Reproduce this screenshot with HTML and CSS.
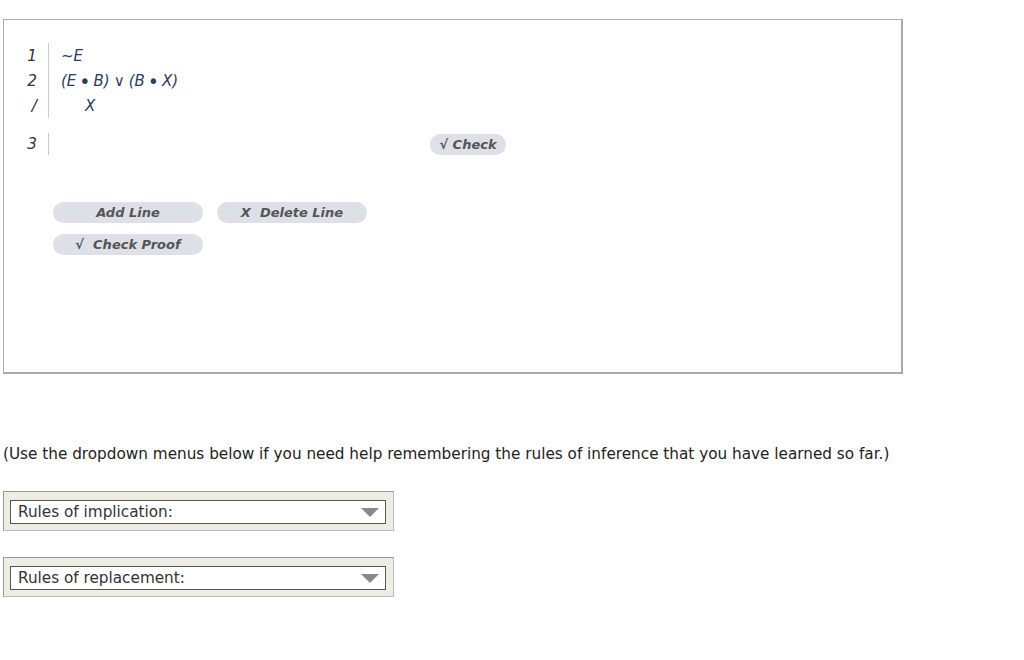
FILE: index.html
```html
<!DOCTYPE html>
<html lang="en">
<head>
  <meta charset="UTF-8" />
  <title>Proof</title>
  <link rel="stylesheet" href="styles.css">
</head>
<body>
  <div class="page">
    <div class="proof-box">
      <div class="premises">
        <div class="row">
          <div class="num">1</div>
          <div class="formula">~E</div>
        </div>
        <div class="row">
          <div class="num">2</div>
          <div class="formula">(E<span class="op dot">&bull;</span>B)<span class="op">&or;</span>(B<span class="op dot">&bull;</span>X)</div>
        </div>
        <div class="row">
          <div class="num">/</div>
          <div class="formula concl">X</div>
        </div>
      </div>
      <div class="row step">
        <div class="num">3</div>
        <div class="formula"></div>
        <button class="pill check">&radic; Check</button>
      </div>
      <div class="actions">
        <button class="pill">Add Line</button>
        <button class="pill">X&nbsp; Delete Line</button>
        <button class="pill">&radic;&nbsp; Check Proof</button>
      </div>
    </div>

    <p class="hint">(Use the dropdown menus below if you need help remembering the rules of inference that you have learned so far.)</p>

    <div class="dropdown">
      <div class="select">
        <span>Rules of implication:</span>
        <span class="arrow"></span>
      </div>
    </div>
    <div class="dropdown">
      <div class="select">
        <span>Rules of replacement:</span>
        <span class="arrow"></span>
      </div>
    </div>
  </div>
</body>
</html>
```

FILE: styles.css
```css
body {
  margin: 0;
  padding: 0;
  font-family: Verdana, "DejaVu Sans", sans-serif;
  font-size: 15.25px;
  color: #222;
  background: #fff;
}
.page {
  padding: 19px 0 0 3px;
}
.proof-box {
  width: 900px;
  height: 355px;
  border: 2px solid #aaa;
  border-top-width: 1px;
  border-left-width: 1px;
  box-sizing: border-box;
  padding-top: 23px;
}
.row {
  display: flex;
  align-items: center;
  height: 25px;
}
.num {
  width: 33px;
  text-align: right;
  font-style: italic;
  color: #333;
}
.formula {
  height: 100%;
  margin-left: 11px;
  border-left: 1px solid #ccc;
  padding-left: 12px;
  display: flex;
  align-items: center;
  font-style: italic;
  font-size: 15px;
  color: #2d3b5e;
  white-space: nowrap;
}
.op {
  font-style: normal;
  margin: 0 4px;
}
.op.dot {
  font-size: 19px;
  margin: 0 3px;
}
.formula.concl {
  padding-left: 36px;
}
.step {
  margin-top: 15px;
  height: 22px;
}
.step .formula {
  width: 0;
}
.pill {
  border: none;
  background: #dde0e7;
  border-radius: 11px;
  font-family: Verdana, "DejaVu Sans", sans-serif;
  font-size: 13px;
  font-weight: bold;
  font-style: italic;
  color: #555;
  height: 21px;
  padding: 0;
  cursor: pointer;
}
.check {
  width: 76px;
  margin-left: 369px;
}
.actions {
  display: grid;
  grid-template-columns: 150px 150px;
  column-gap: 14px;
  row-gap: 11px;
  margin: 47px 0 0 49px;
}
.hint {
  margin: 71px 0 28px 0;
}
.dropdown {
  width: 391px;
  height: 40px;
  box-sizing: border-box;
  background: #eeede2;
  border: 1px solid #999;
  border-right-color: #bbb;
  border-bottom-color: #bbb;
  padding: 8px 7px 0 6px;
  margin-bottom: 26px;
}
.select {
  height: 24px;
  box-sizing: border-box;
  background: #fff;
  border: 1px solid #555;
  display: flex;
  align-items: center;
  justify-content: space-between;
  padding: 0 6px 0 7px;
  color: #333;
}
.arrow {
  width: 0;
  height: 0;
  border-left: 9px solid transparent;
  border-right: 9px solid transparent;
  border-top: 9px solid #888;
}
```
